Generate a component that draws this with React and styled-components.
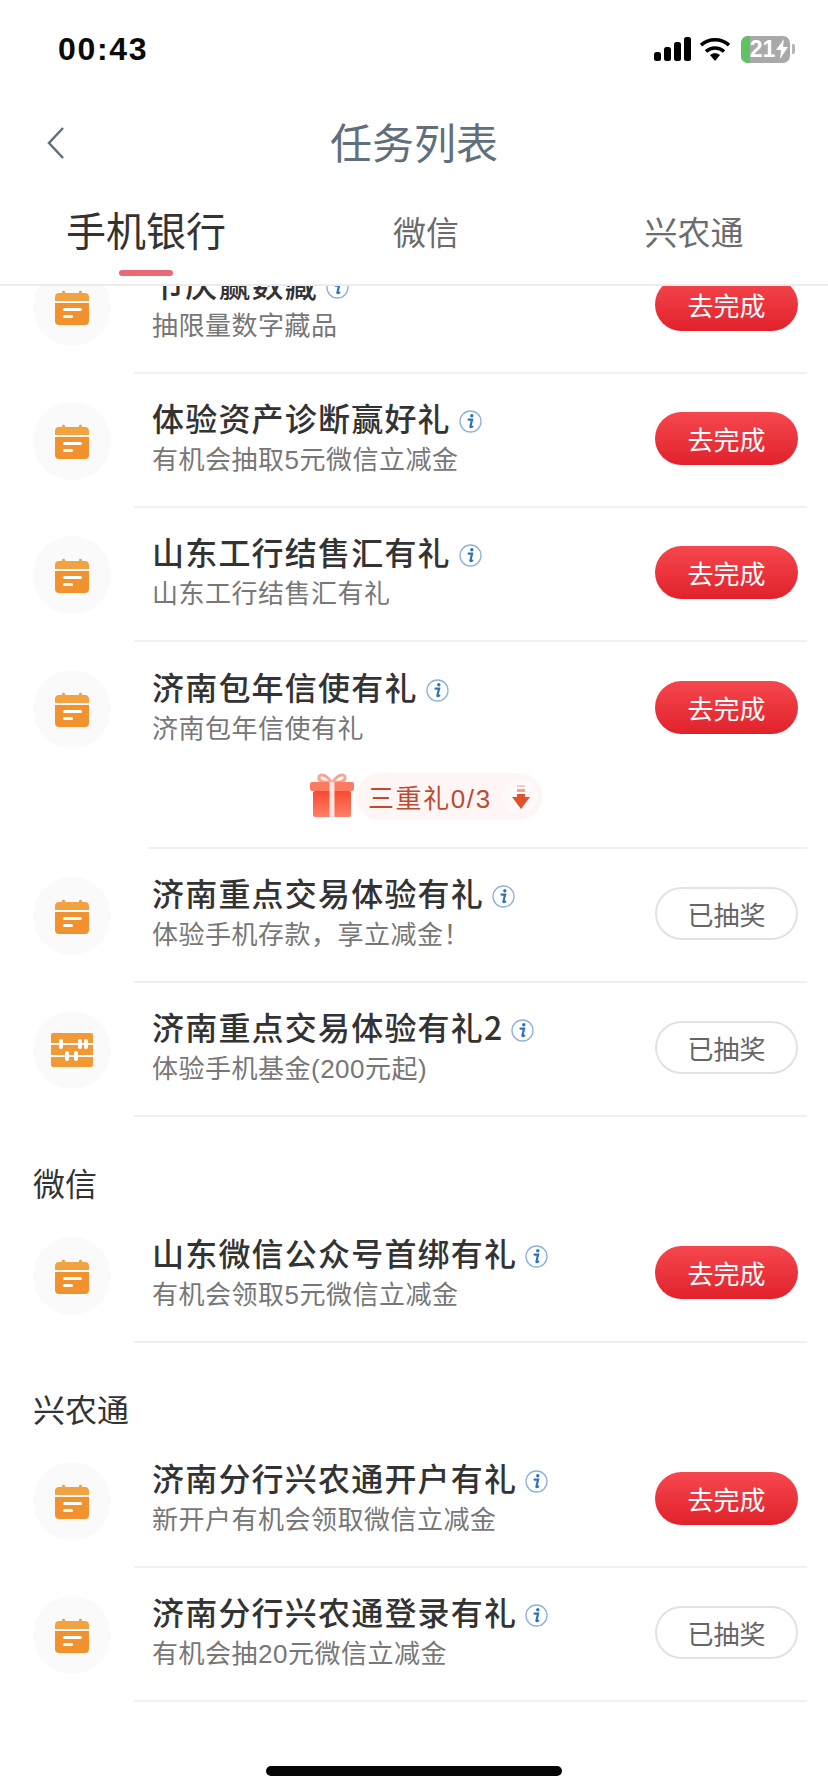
import React from 'react';
import styled, { createGlobalStyle } from 'styled-components';

const GlobalStyle = createGlobalStyle`
  html, body {
    margin: 0;
    padding: 0;
    background: #fff;
  }
  * {
    box-sizing: border-box;
  }
`;

const Page = styled.div`
  position: relative;
  width: 828px;
  height: 1792px;
  overflow: hidden;
  display: flex;
  flex-direction: column;
  background: #fff;
  font-family: "Liberation Sans", "Noto Sans CJK SC", sans-serif;
`;

const StatusBar = styled.div`
  flex: none;
  height: 100px;
  padding: 0 33px 2px 58px;
  display: flex;
  align-items: center;
  justify-content: space-between;
`;

const Time = styled.div`
  font-size: 32px;
  font-weight: 700;
  letter-spacing: 1.7px;
  color: #0a0a0a;
`;

const StatusIcons = styled.div`
  display: flex;
  align-items: center;
  gap: 10px;
`;

const WifiSlot = styled.div`
  display: flex;
  margin-left: -3px;
`;

const Battery = styled.div`
  position: relative;
  width: 49px;
  height: 27px;
  border-radius: 7px;
  overflow: hidden;
  background: #a9a9a9;
  display: flex;
  align-items: center;
  justify-content: center;
  gap: 1px;
  padding-left: 7px;
  color: #fff;
  font-size: 23px;
  font-weight: 700;
  &::before {
    content: '';
    position: absolute;
    left: 0;
    top: 0;
    bottom: 0;
    width: 9px;
    background: #5fc264;
  }
  span {
    position: relative;
  }
`;

const BatteryCap = styled.div`
  width: 3px;
  height: 10px;
  margin-left: -8px;
  border-radius: 0 2px 2px 0;
  background: #b5b5b5;
`;

const NavBar = styled.div`
  flex: none;
  height: 86px;
  position: relative;
  display: flex;
  align-items: center;
  justify-content: center;
  padding-bottom: 6px;
`;

const BackIcon = styled.svg`
  position: absolute;
  left: 46px;
  top: 26px;
`;

const NavTitle = styled.div`
  font-size: 42px;
  color: #5f6f7c;
`;

const Tabs = styled.div`
  flex: none;
  height: 100px;
  display: grid;
  grid-template-columns: 292px 268px 268px;
  border-bottom: 2px solid #ececec;
`;

const Tab = styled.div`
  position: relative;
  text-align: center;
  padding-top: ${(p) => (p.$active ? '20px' : '22px')};
  line-height: 52px;
  font-size: ${(p) => (p.$active ? '40px' : '33px')};
  color: ${(p) => (p.$active ? '#333' : '#6c6c6c')};
  ${(p) =>
    p.$active &&
    `
    &::after {
      content: '';
      position: absolute;
      left: 119px;
      top: 84px;
      width: 54px;
      height: 6px;
      border-radius: 3px;
      background: #e96a74;
    }
  `}
`;

const Scroll = styled.div`
  flex: 1;
  min-height: 0;
  overflow: hidden;
`;

const List = styled.div`
  margin-top: -46px;
`;

const Row = styled.div`
  display: flex;
  align-items: center;
  padding-left: 33px;
`;

const IconCircle = styled.div`
  flex: none;
  width: 78px;
  height: 78px;
  border-radius: 50%;
  background: #fafafa;
  display: flex;
  align-items: center;
  justify-content: center;
`;

const RowMain = styled.div`
  flex: 1;
  height: 134px;
  margin: 0 21px 0 23px;
  padding: 0 9px 0 18px;
  display: flex;
  align-items: center;
  justify-content: space-between;
  border-bottom: ${(p) => (p.$plain ? '0' : '2px solid #f0f0f0')};
`;

const RowText = styled.div`
  display: flex;
  flex-direction: column;
  padding-bottom: 4px;
`;

const TitleLine = styled.div`
  display: flex;
  align-items: center;
  gap: 8px;
  margin: -2px 0 2px;
`;

const Title = styled.div`
  font-family: "Noto Sans CJK SC", sans-serif;
  font-size: 32px;
  font-weight: 500;
  line-height: 44px;
  letter-spacing: 1.2px;
  color: #333;
`;

const InfoWrap = styled.svg`
  flex: none;
  margin-top: 9px;
`;

const Sub = styled.div`
  font-size: 26px;
  line-height: 38px;
  letter-spacing: 0.5px;
  color: #777;
`;

const ActionButton = styled.div`
  flex: none;
  width: 143px;
  height: 53px;
  margin-top: -4px;
  border-radius: 27px;
  display: flex;
  align-items: center;
  justify-content: center;
  font-size: 26px;
  color: ${(p) => (p.$done ? '#666' : '#fff')};
  background: ${(p) => (p.$done ? '#fff' : 'linear-gradient(180deg, #f6474e, #e1222b)')};
  border: ${(p) => (p.$done ? '2px solid #e2e2e2' : '0')};
`;

const GiftBar = styled.div`
  height: 76px;
  margin: -3px 21px 0 148px;
  padding-left: 162px;
  display: flex;
  align-items: flex-start;
  border-bottom: 2px solid #f0f0f0;
`;

const GiftPill = styled.div`
  height: 47px;
  width: 186px;
  margin-left: 2px;
  padding: 0 4px 0 12px;
  display: flex;
  align-items: center;
  justify-content: space-between;
  border-radius: 24px;
  background: #fdf6f4;
  font-size: 26px;
  letter-spacing: 1.6px;
  color: #bf4a30;
`;

const ArrowBubble = styled.div`
  width: 35px;
  height: 35px;
  border-radius: 50%;
  background: #fffafa;
  display: flex;
  align-items: center;
  justify-content: center;
`;

const SectionHead = styled.div`
  height: 91.5px;
  padding: 48px 0 0 33px;
  font-size: 32px;
  line-height: 40px;
  color: #333;
`;

const HomeBar = styled.div`
  position: absolute;
  left: 266px;
  bottom: 16px;
  width: 296px;
  height: 10px;
  border-radius: 5px;
  background: #050505;
`;

const SignalIcon = () => (
  <svg width="38" height="24" viewBox="0 0 38 24">
    <rect x="0" y="15" width="7" height="9" rx="2.5" fill="#000" />
    <rect x="10" y="10" width="7" height="14" rx="2.5" fill="#000" />
    <rect x="20" y="5" width="7" height="19" rx="2.5" fill="#000" />
    <rect x="30" y="0" width="7" height="24" rx="2.5" fill="#000" />
  </svg>
);

const WifiIcon = () => (
  <svg width="32" height="24" viewBox="0 0 32 24">
    <path d="M16 24l-5-6c3-2.4 7-2.4 10 0z" fill="#000" />
    <path d="M7 14.5c5.2-4.6 12.8-4.6 18 0" fill="none" stroke="#000" strokeWidth="3.6" />
    <path d="M2 8.2c8-7.2 20-7.2 28 0" fill="none" stroke="#000" strokeWidth="3.6" />
  </svg>
);

const CalendarIcon = () => (
  <svg width="36" height="36" viewBox="0 0 36 36">
    <path d="M8 3c0-1.6 3-1.6 3 0v1h14V3c0-1.6 3-1.6 3 0v1h3c2.5 0 4 1.6 4 4v4H1V8c0-2.4 1.5-4 4-4h3z" fill="#f2a341" />
    <path d="M1 14h34v18c0 2.4-1.5 4-4 4H5c-2.5 0-4-1.6-4-4z" fill="#f1922f" />
    <rect x="9" y="19" width="19" height="3" rx="1.5" fill="#fff" />
    <rect x="9" y="26" width="10" height="3" rx="1.5" fill="#fff" />
  </svg>
);

const AbacusIcon = () => (
  <svg width="42" height="34" viewBox="0 0 42 34">
    <rect x="0" y="0" width="42" height="34" rx="2" fill="#f19a35" />
    <rect x="0" y="10" width="42" height="2" fill="#fff" />
    <rect x="0" y="22" width="42" height="2" fill="#fff" />
    <rect x="8" y="6" width="4" height="10" rx="2" fill="#fff" />
    <rect x="27" y="6" width="4" height="10" rx="2" fill="#fff" />
    <rect x="33" y="6" width="4" height="10" rx="2" fill="#fff" />
    <rect x="14" y="18" width="4" height="10" rx="2" fill="#fff" />
    <rect x="23" y="18" width="4" height="10" rx="2" fill="#fff" />
  </svg>
);

const InfoIcon = () => (
  <InfoWrap width="23" height="23" viewBox="0 0 23 23">
    <circle cx="11.5" cy="11.5" r="10.5" fill="#fff" stroke="#8db2d8" strokeWidth="1.3" />
    <circle cx="12.8" cy="5.8" r="1.7" fill="#2f73b7" />
    <path d="M9.5 9.6h3.6l-1.7 7c-.1.6.4.8 1.9 0" fill="none" stroke="#2f73b7" strokeWidth="2.2" strokeLinecap="round" />
  </InfoWrap>
);

const GiftIcon = () => (
  <svg width="44" height="44" viewBox="0 0 44 44">
    <defs>
      <linearGradient id="giftBox" x1="0" y1="0" x2="0" y2="1">
        <stop offset="0" stopColor="#f8492f" />
        <stop offset="1" stopColor="#fd8068" />
      </linearGradient>
    </defs>
    <path d="M21 9C17 2 10 0 9 4s5 6 12 5zM23 9c4-7 11-9 12-5s-5 6-12 5z" fill="none" stroke="#f8a593" strokeWidth="3" />
    <rect x="0" y="9" width="44" height="9" rx="2" fill="#fa7a62" />
    <rect x="3" y="18" width="38" height="26" rx="2" fill="url(#giftBox)" />
    <rect x="19.5" y="9" width="5" height="35" fill="#fde3dc" />
  </svg>
);

const DownArrow = () => (
  <svg width="18" height="24" viewBox="0 0 18 24">
    <rect x="5" y="0" width="8" height="2" fill="#f7c9ba" />
    <rect x="5" y="4" width="8" height="3" fill="#f2a48e" />
    <path d="M5 9h8v3h5l-9 12L0 12h5z" fill="#e0512c" />
  </svg>
);

const bankTop = [
  { title: '节庆赢数藏', sub: '抽限量数字藏品' },
  { title: '体验资产诊断赢好礼', sub: '有机会抽取5元微信立减金' },
  { title: '山东工行结售汇有礼', sub: '山东工行结售汇有礼' },
  { title: '济南包年信使有礼', sub: '济南包年信使有礼', plain: true },
];

const bankBottom = [
  { title: '济南重点交易体验有礼', sub: '体验手机存款，享立减金！', done: true },
  { title: '济南重点交易体验有礼2', sub: '体验手机基金(200元起)', done: true, abacus: true },
];

const wechat = [{ title: '山东微信公众号首绑有礼', sub: '有机会领取5元微信立减金' }];

const xingnong = [
  { title: '济南分行兴农通开户有礼', sub: '新开户有机会领取微信立减金' },
  { title: '济南分行兴农通登录有礼', sub: '有机会抽20元微信立减金', done: true },
];

const TaskRow = ({ title, sub, done, abacus, plain }) => (
  <Row>
    <IconCircle>{abacus ? <AbacusIcon /> : <CalendarIcon />}</IconCircle>
    <RowMain $plain={plain}>
      <RowText>
        <TitleLine>
          <Title>{title}</Title>
          <InfoIcon />
        </TitleLine>
        <Sub>{sub}</Sub>
      </RowText>
      <ActionButton $done={done}>{done ? '已抽奖' : '去完成'}</ActionButton>
    </RowMain>
  </Row>
);

const App = () => (
  <Page>
    <GlobalStyle />
    <StatusBar>
      <Time>00:43</Time>
      <StatusIcons>
        <SignalIcon />
        <WifiSlot>
          <WifiIcon />
        </WifiSlot>
        <Battery>
          <span>21</span>
          <svg width="12" height="20" viewBox="0 0 12 20">
            <path d="M8 0L0 11h5l-1 9 8-12H7z" fill="#fff" />
          </svg>
        </Battery>
        <BatteryCap />
      </StatusIcons>
    </StatusBar>
    <NavBar>
      <BackIcon width="20" height="34" viewBox="0 0 20 34">
        <path d="M17 2L3 17l14 15" fill="none" stroke="#5f6f7c" strokeWidth="2.5" />
      </BackIcon>
      <NavTitle>任务列表</NavTitle>
    </NavBar>
    <Tabs>
      <Tab $active>手机银行</Tab>
      <Tab>微信</Tab>
      <Tab>兴农通</Tab>
    </Tabs>
    <Scroll>
      <List>
        {bankTop.map((t) => (
          <TaskRow key={t.title} {...t} />
        ))}
        <GiftBar>
          <GiftIcon />
          <GiftPill>
            三重礼0/3
            <ArrowBubble>
              <DownArrow />
            </ArrowBubble>
          </GiftPill>
        </GiftBar>
        {bankBottom.map((t) => (
          <TaskRow key={t.title} {...t} />
        ))}
        <SectionHead>微信</SectionHead>
        {wechat.map((t) => (
          <TaskRow key={t.title} {...t} />
        ))}
        <SectionHead>兴农通</SectionHead>
        {xingnong.map((t) => (
          <TaskRow key={t.title} {...t} />
        ))}
      </List>
    </Scroll>
    <HomeBar />
  </Page>
);

export default App;
